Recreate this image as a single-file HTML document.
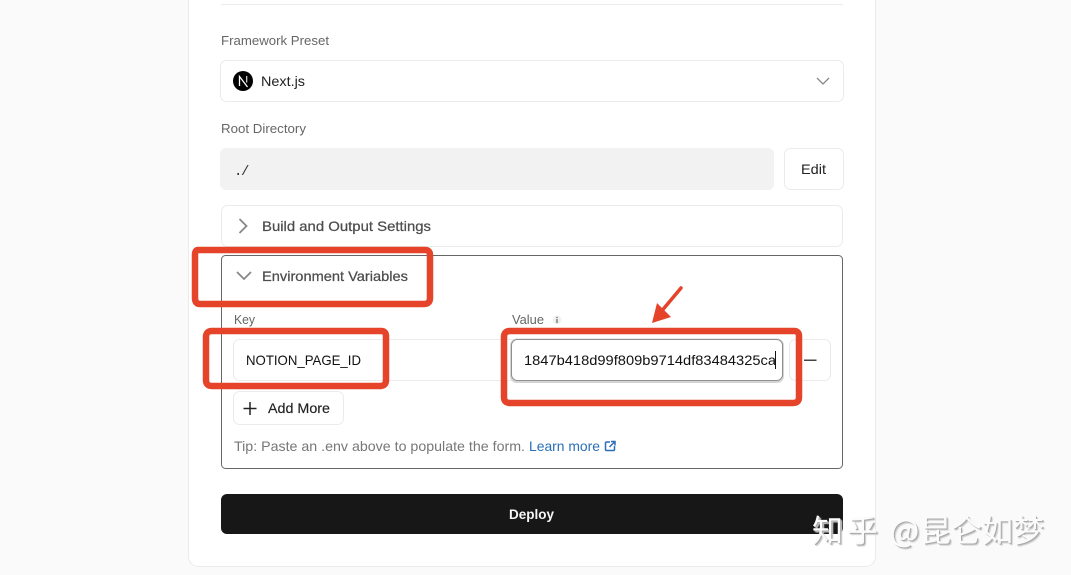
<!DOCTYPE html>
<html><head><meta charset="utf-8">
<style>
html,body{margin:0;padding:0;width:1071px;height:575px;overflow:hidden;background:#fafafa}
svg{position:absolute;left:0;top:0}
text{font-family:"Liberation Sans",sans-serif}
.wm{position:absolute;top:507px;font:400 31px/44px "Noto Sans CJK SC","Liberation Sans",sans-serif;color:#fbfbfb;white-space:nowrap;text-shadow:1px 1px 0 #aaa,2px 2px 1px #ccc}
</style></head>
<body>
<svg width="1071" height="575" viewBox="0 0 1071 575" xmlns="http://www.w3.org/2000/svg">
<rect x="188.5" y="-20" width="687" height="586.500" rx="10" fill="#fff" stroke="#ebebeb"/>
<line x1="221" y1="4.500" x2="843" y2="4.500" stroke="#ebebeb"/>

<text x="221" y="45" font-size="13" fill="#666" textLength="108" lengthAdjust="spacingAndGlyphs">Framework Preset</text>
<rect x="220.500" y="60.500" width="623" height="41" rx="6" fill="#fff" stroke="#ebebeb"/>
<circle cx="243" cy="81" r="10" fill="#000"/>
<path d="M239.500 86V76.500L247.500 87" stroke="#fff" stroke-width="1.300" fill="none"/>
<path d="M246.700 76V82.500" stroke="#ddd" stroke-width="1.200" fill="none"/>
<text x="261" y="86" font-size="14" fill="#222" textLength="44" lengthAdjust="spacingAndGlyphs">Next.js</text>
<path d="M817 78L823 84L829 78" stroke="#888" stroke-width="1.300" fill="none"/>

<text x="221" y="133" font-size="13" fill="#666" textLength="85" lengthAdjust="spacingAndGlyphs">Root Directory</text>
<rect x="220" y="148" width="554" height="42" rx="6" fill="#f2f2f2"/>
<text x="234" y="175" font-size="14" fill="#333" style="font-family:'Liberation Mono',monospace">.</text>
<text x="241" y="175" font-size="14" fill="#333" style="font-family:'Liberation Mono',monospace">/</text>
<rect x="784.500" y="148.500" width="59" height="41" rx="6" fill="#fff" stroke="#ebebeb"/>
<text x="801" y="174" font-size="14" fill="#222" textLength="25" lengthAdjust="spacingAndGlyphs">Edit</text>

<rect x="221.500" y="205.500" width="621" height="41" rx="6" fill="#fff" stroke="#ebebeb"/>
<path d="M239.500 219L246.500 226L239.500 233" stroke="#888" stroke-width="1.800" fill="none"/>
<text x="262" y="231" font-size="14" font-weight="400" fill="#4d4d4d" stroke="#4d4d4d" stroke-width=".25" textLength="169" lengthAdjust="spacingAndGlyphs">Build and Output Settings</text>

<rect x="221.500" y="255.500" width="621" height="213" rx="4" fill="#fff" stroke="#666"/>
<path d="M237 272L244 279L251 272" stroke="#888" stroke-width="1.800" fill="none"/>
<text x="262" y="281" font-size="14" fill="#4d4d4d" stroke="#4d4d4d" stroke-width=".25" textLength="146" lengthAdjust="spacingAndGlyphs">Environment Variables</text>

<text x="234" y="324" font-size="12.500" fill="#666" textLength="21" lengthAdjust="spacingAndGlyphs">Key</text>
<text x="512" y="324" font-size="12.500" fill="#666" textLength="32" lengthAdjust="spacingAndGlyphs">Value</text>
<circle cx="557" cy="320" r="4.500" fill="#f0f0f0"/>
<rect x="556.300" y="319" width="1.400" height="4" fill="#777"/><rect x="556.300" y="316.800" width="1.400" height="1.300" fill="#777"/>

<rect x="233.500" y="339.500" width="330" height="41" rx="6" fill="#fff" stroke="#ebebeb"/>
<text x="246" y="365" font-size="14" fill="#111" textLength="115" lengthAdjust="spacingAndGlyphs">NOTION_PAGE_ID</text>

<rect x="789.500" y="339.500" width="41" height="41" rx="6" fill="#fff" stroke="#ebebeb"/>
<rect x="804" y="359.500" width="12.500" height="1.500" fill="#444"/>

<rect x="510" y="338.500" width="274" height="44.500" rx="7" fill="#d4d4d4"/>
<rect x="511.500" y="339.500" width="271" height="41" rx="6" fill="#fff" stroke="#8f8f8f"/>
<text x="524" y="365" font-size="14" fill="#111" textLength="252" lengthAdjust="spacingAndGlyphs">1847b418d99f809b9714df83484325ca</text>
<rect x="775" y="351" width="1" height="18" fill="#111"/>

<rect x="233.500" y="391.500" width="110" height="33" rx="6" fill="#fff" stroke="#ebebeb"/>
<path d="M250 402V415M243.500 408.500H256.500" stroke="#222" stroke-width="1.500" fill="none"/>
<text x="268" y="413" font-size="14" fill="#222" stroke="#222" stroke-width=".15" textLength="62" lengthAdjust="spacingAndGlyphs">Add More</text>

<text x="234" y="451" font-size="14" fill="#777" textLength="291" lengthAdjust="spacingAndGlyphs">Tip: Paste an .env above to populate the form.</text>
<text x="529" y="451" font-size="14" fill="#2a6fb8" textLength="71" lengthAdjust="spacingAndGlyphs">Learn more</text>
<path d="M610 442H606.500Q605.500 442 605.500 443V449.500Q605.500 450.500 606.500 450.500H613.500Q614.500 450.500 614.500 449.500V446M609.500 447L614.500 442M611 441.500H615V445.500" stroke="#2a6fb8" stroke-width="1.500" fill="none"/>

<rect x="221" y="494" width="622" height="40" rx="6" fill="#171717"/>
<text x="509" y="519" font-size="14" font-weight="700" fill="#f5f5f5" textLength="45" lengthAdjust="spacingAndGlyphs">Deploy</text>

<g fill="none" stroke="#e5432a" stroke-width="6.500">
<path d="M198 250H425Q430 250 430 255V298Q430 304 424 304H200Q195 304 195 298V255Q195 250 198 250Z"/>
<path d="M212 331H381Q386 331 386 336V380Q386 386 380 386H212Q206 386 206 380V337Q206 331 212 331Z"/>
<path d="M510 331H794Q799 331 799 336V397Q799 403 793 403H510Q504 403 504 397V337Q504 331 510 331Z"/>
</g>
<path d="M681 288L660 313" stroke="#e5432a" stroke-width="3.500" fill="none" stroke-linecap="round"/>
<path d="M652 323L657 303L671 317Z" fill="#e5432a"/>
</svg>
<div class="wm" style="left:812px">知</div>
<div class="wm" style="left:847px">乎</div>
<div class="wm" style="left:890px">@</div>
<div class="wm" style="left:920px;letter-spacing:0">昆</div>
<div class="wm" style="left:951px">仑</div>
<div class="wm" style="left:982px">如</div>
<div class="wm" style="left:1013px">梦</div>
</body></html>
